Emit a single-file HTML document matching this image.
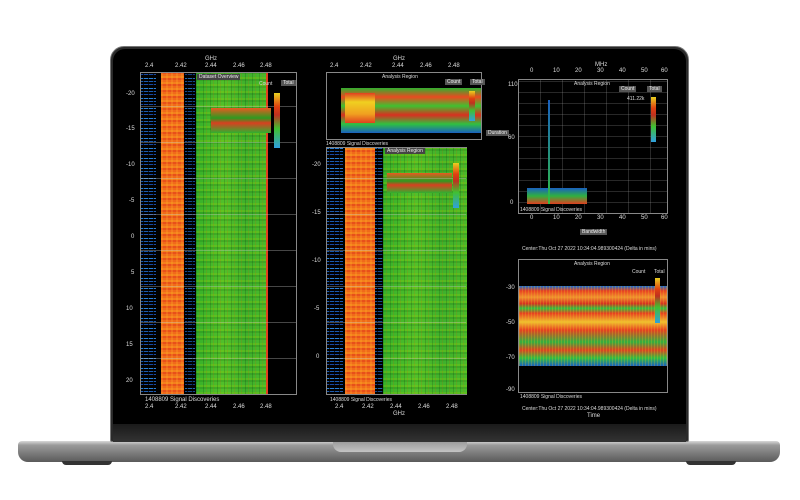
<!DOCTYPE html>
<html><head><meta charset="utf-8"><style>
*{margin:0;padding:0;box-sizing:border-box}
body{width:800px;height:500px;background:#fff;position:relative;overflow:hidden;font-family:"Liberation Sans",sans-serif}
.a{position:absolute}
.t{position:absolute;color:#ddd;font-size:6px;white-space:nowrap}
.lab{position:absolute;background:#555;color:#eee;font-size:5px;padding:0 2px}
.grn{background:
 repeating-linear-gradient(90deg,rgba(0,0,0,.15) 0 1px,transparent 1px 3px,rgba(255,60,0,.12) 3px 4px,transparent 4px 7px),
 repeating-linear-gradient(0deg,rgba(150,210,0,.25) 0 2px,transparent 2px 5px,rgba(0,80,0,.15) 5px 7px),
 linear-gradient(90deg,#35b02a,#52c02a 40%,#3eb02c 70%,#4aba2a)}
.org{background:
 repeating-linear-gradient(90deg,rgba(255,180,40,.25) 0 2px,transparent 2px 5px),
 repeating-linear-gradient(0deg,#f06a1a 0 2px,#e8501a 2px 4px,#f4801c 4px 6px)}
.blu{background:
 repeating-linear-gradient(90deg,transparent 0 2px,rgba(0,0,0,.7) 2px 3px,transparent 3px 5px),
 repeating-linear-gradient(0deg,#000 0 2px,#1a5ab0 2px 3px,#000 3px 5px,#2a80d8 5px 6px,#000 6px 9px,#1848a0 9px 10px)}
.cb{background:linear-gradient(180deg,#e8d020,#e04010 25%,#c03020 40%,#40c030 65%,#30a0e0 100%)}
.grid{background:repeating-linear-gradient(0deg,transparent 0 35px,rgba(200,200,200,.35) 35px 36px)}
</style></head><body>
<!-- base -->
<div class="a" style="left:18px;top:441px;width:762px;height:21px;border-radius:4px 4px 10px 10px;background:linear-gradient(180deg,#d8d8d8,#9a9a9a 20%,#7a7a7a 60%,#5a5a5a)"></div>
<div class="a" style="left:333px;top:441px;width:134px;height:11px;border-radius:0 0 8px 8px;background:linear-gradient(180deg,#999,#c4c4c4)"></div>
<div class="a" style="left:62px;top:461px;width:50px;height:4px;border-radius:0 0 4px 4px;background:#333"></div>
<div class="a" style="left:686px;top:461px;width:50px;height:4px;border-radius:0 0 4px 4px;background:#333"></div>
<!-- lid -->
<div class="a" style="left:110px;top:46px;width:579px;height:396px;border-radius:14px 14px 2px 2px;background:#2a2a2a;border:1px solid #777"></div>
<div class="a" style="left:113px;top:49px;width:573px;height:393px;border-radius:12px 12px 0 0;background:#000"></div>
<div class="a" style="left:113px;top:424px;width:573px;height:18px;background:linear-gradient(180deg,#1a1a1a,#333)"></div>

<!-- LEFT PANEL -->
<div class="t" style="left:145px;top:63px">2.4</div><div class="t" style="left:175px;top:63px">2.42</div><div class="t" style="left:205px;top:63px">2.44</div><div class="t" style="left:233px;top:63px">2.46</div><div class="t" style="left:260px;top:63px">2.48</div>
<div class="t" style="left:205px;top:56px">GHz</div>
<div class="a" style="left:140px;top:72px;width:157px;height:323px;border:1px solid #888;background:#000">
 <div class="a blu" style="left:0;top:0;width:15px;height:321px"></div>
 <div class="a org" style="left:20px;top:0;width:23px;height:321px"></div>
 <div class="a blu" style="left:44px;top:0;width:10px;height:321px;opacity:.8"></div>
 <div class="a grn" style="left:55px;top:0;width:71px;height:321px"></div>
 <div class="a" style="left:125px;top:0;width:2px;height:321px;background:#e04020"></div>
 <div class="a" style="left:70px;top:35px;width:60px;height:25px;background:linear-gradient(180deg,#e85a20,#2e9a20 40%,#d84020 60%,#30b030)"></div>
 <div class="a grid" style="left:0;top:0;width:155px;height:321px"></div>
 <div class="a cb" style="left:133px;top:20px;width:6px;height:55px"></div>
 <div class="lab" style="left:56px;top:1px;background:#444">Dataset Overview</div>
 <div class="t" style="left:118px;top:8px;font-size:5px">Count</div><div class="lab" style="left:140px;top:7px">Total</div>
</div>
<div class="t" style="left:126px;top:91px">-20</div><div class="t" style="left:126px;top:126px">-15</div><div class="t" style="left:126px;top:162px">-10</div><div class="t" style="left:129px;top:198px">-5</div><div class="t" style="left:131px;top:234px">0</div><div class="t" style="left:131px;top:270px">5</div><div class="t" style="left:126px;top:306px">10</div><div class="t" style="left:126px;top:342px">15</div><div class="t" style="left:126px;top:378px">20</div>
<div class="t" style="left:145px;top:397px">1408809 Signal Discoveries</div>
<div class="t" style="left:145px;top:404px">2.4</div><div class="t" style="left:175px;top:404px">2.42</div><div class="t" style="left:205px;top:404px">2.44</div><div class="t" style="left:233px;top:404px">2.46</div><div class="t" style="left:260px;top:404px">2.48</div>

<!-- MIDDLE TOP -->
<div class="t" style="left:330px;top:63px">2.4</div><div class="t" style="left:360px;top:63px">2.42</div><div class="t" style="left:392px;top:63px">2.44</div><div class="t" style="left:420px;top:63px">2.46</div><div class="t" style="left:448px;top:63px">2.48</div>
<div class="t" style="left:393px;top:56px">GHz</div>
<div class="a" style="left:326px;top:72px;width:156px;height:68px;border:1px solid #888;background:#000">
 <div class="a" style="left:14px;top:15px;width:140px;height:45px;background:linear-gradient(180deg,#30b030,#e84a20 20%,#40c030 40%,#d83020 60%,#30c040 80%,#1a60c0)"></div>
 <div class="a" style="left:18px;top:20px;width:30px;height:30px;background:linear-gradient(180deg,#e04020,#f0d020 30%,#f0a020 70%,#e04020)"></div>
 <div class="t" style="left:55px;top:1px;font-size:5px">Analysis Region</div>
 <div class="lab" style="left:118px;top:6px">Count</div><div class="lab" style="left:143px;top:6px">Total</div>
 <div class="a cb" style="left:142px;top:18px;width:6px;height:30px"></div>
</div>
<div class="t" style="left:326px;top:141px;font-size:5px">1408809 Signal Discoveries</div>
<!-- MIDDLE BOTTOM -->
<div class="a" style="left:326px;top:147px;width:141px;height:248px;border:1px solid #888;background:#000">
 <div class="a blu" style="left:0;top:0;width:16px;height:246px"></div>
 <div class="a org" style="left:18px;top:0;width:30px;height:246px"></div>
 <div class="a blu" style="left:48px;top:0;width:8px;height:246px;opacity:.8"></div>
 <div class="a grn" style="left:56px;top:0;width:84px;height:246px"></div>
 <div class="a" style="left:60px;top:25px;width:65px;height:20px;background:linear-gradient(180deg,#e85a20,#2e9a20 40%,#d84020 60%,#30b030)"></div>
 <div class="a grid" style="left:0;top:0;width:139px;height:246px"></div>
 <div class="a cb" style="left:126px;top:15px;width:6px;height:45px"></div>
 <div class="lab" style="left:58px;top:0;background:#444">Analysis Region</div>
</div>
<div class="t" style="left:312px;top:162px">-20</div><div class="t" style="left:312px;top:210px">-15</div><div class="t" style="left:312px;top:258px">-10</div><div class="t" style="left:314px;top:306px">-5</div><div class="t" style="left:316px;top:354px">0</div>
<div class="t" style="left:330px;top:397px;font-size:5px">1408809 Signal Discoveries</div>
<div class="t" style="left:335px;top:404px">2.4</div><div class="t" style="left:362px;top:404px">2.42</div><div class="t" style="left:390px;top:404px">2.44</div><div class="t" style="left:418px;top:404px">2.46</div><div class="t" style="left:446px;top:404px">2.48</div>
<div class="t" style="left:393px;top:411px">GHz</div>
<div class="lab" style="left:486px;top:130px">Duration</div>

<!-- RIGHT TOP scatter -->
<div class="t" style="left:530px;top:68px">0</div><div class="t" style="left:553px;top:68px">10</div><div class="t" style="left:575px;top:68px">20</div><div class="t" style="left:597px;top:68px">30</div><div class="t" style="left:619px;top:68px">40</div><div class="t" style="left:641px;top:68px">50</div><div class="t" style="left:661px;top:68px">60</div>
<div class="t" style="left:595px;top:62px">MHz</div>
<div class="a" style="left:518px;top:79px;width:150px;height:135px;border:1px solid #888;background:#000">
 <div class="a grid" style="left:0;top:0;width:148px;height:133px;background:repeating-linear-gradient(0deg,transparent 0 10px,rgba(160,160,160,.25) 10px 11px),repeating-linear-gradient(90deg,transparent 0 21px,rgba(160,160,160,.25) 21px 22px)"></div>
 <div class="a" style="left:8px;top:108px;width:60px;height:16px;background:linear-gradient(180deg,#1a60c0,#30b040 50%,#e04020)"></div>
 <div class="a" style="left:29px;top:20px;width:2px;height:104px;background:linear-gradient(180deg,#1a60c0,#30c040)"></div>
 <div class="t" style="left:55px;top:1px;font-size:5px">Analysis Region</div>
 <div class="lab" style="left:100px;top:6px">Count</div><div class="lab" style="left:128px;top:6px">Total</div>
 <div class="t" style="left:108px;top:16px;font-size:5px">411.22k</div>
 <div class="a cb" style="left:132px;top:17px;width:5px;height:45px"></div>
</div>
<div class="t" style="left:508px;top:82px">110</div><div class="t" style="left:508px;top:135px">60</div><div class="t" style="left:510px;top:200px">0</div>
<div class="t" style="left:520px;top:207px;font-size:5px">1408809 Signal Discoveries</div>
<div class="t" style="left:530px;top:215px">0</div><div class="t" style="left:553px;top:215px">10</div><div class="t" style="left:575px;top:215px">20</div><div class="t" style="left:597px;top:215px">30</div><div class="t" style="left:619px;top:215px">40</div><div class="t" style="left:641px;top:215px">50</div><div class="t" style="left:661px;top:215px">60</div>
<div class="lab" style="left:580px;top:229px">Bandwidth</div>

<!-- RIGHT BOTTOM -->
<div class="t" style="left:522px;top:246px;font-size:5px">Center:Thu Oct 27 2022 10:34:04.989300424 (Delta in mins)</div>
<div class="a" style="left:518px;top:259px;width:150px;height:134px;border:1px solid #888;background:#000">
 <div class="a" style="left:0;top:26px;width:148px;height:80px;background:
  repeating-linear-gradient(90deg,rgba(240,200,30,.25) 0 1px,transparent 1px 3px),
  linear-gradient(180deg,#1a70d0 0,#e84020 6%,#f09030 14%,#d83020 22%,#30c040 28%,#e84020 34%,#f0c030 45%,#e84020 55%,#30b040 70%,#e04020 80%,#30c040 90%,#1a60c0 100%)"></div>
 <div class="t" style="left:55px;top:1px;font-size:5px">Analysis Region</div>
 <div class="t" style="left:113px;top:9px;font-size:5px">Count</div><div class="t" style="left:135px;top:9px;font-size:5px">Total</div>
 <div class="a cb" style="left:136px;top:18px;width:5px;height:45px"></div>
</div>
<div class="t" style="left:506px;top:285px">-30</div><div class="t" style="left:506px;top:320px">-50</div><div class="t" style="left:506px;top:355px">-70</div><div class="t" style="left:506px;top:387px">-90</div>
<div class="t" style="left:520px;top:394px;font-size:5px">1408809 Signal Discoveries</div>
<div class="t" style="left:522px;top:406px;font-size:5px">Center:Thu Oct 27 2022 10:34:04.989300424 (Delta in mins)</div>
<div class="t" style="left:587px;top:413px">Time</div>
</body></html>
